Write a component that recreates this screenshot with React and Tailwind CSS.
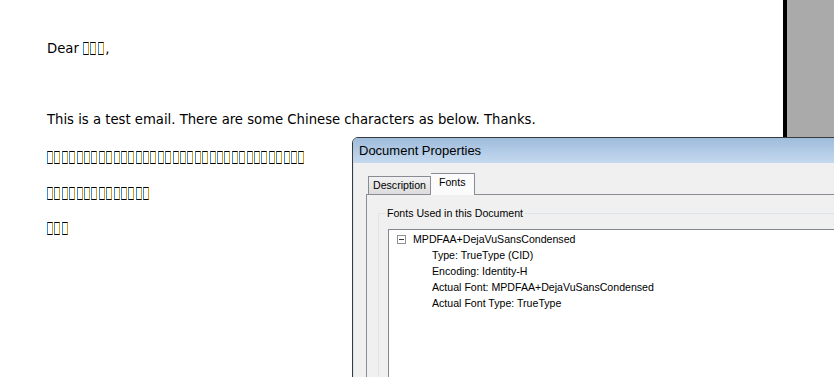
import React from "react";

const Tofu = ({ count }) => (
    <span className="inline-flex items-center align-middle">
        {Array.from({ length: count }).map((_, i) => (
            <span
                key={i}
                className="inline-block w-[6px] h-[13px] mr-[1.4px] border border-black border-l-[#3b8fd6] border-r-[#d99a1e]"
            />
        ))}
    </span>
);

const TreeRow = ({ children, indent }) => (
    <div className={indent ? "pl-[43px]" : "pl-[8px] flex items-center"}>
        {children}
    </div>
);

const App = () => {
    return (
        <div className="relative w-[834px] h-[377px] overflow-hidden bg-white">

            {/* viewer background to the right of the page */}
            <div className="absolute top-0 left-[783px] w-[51px] h-full flex">
                <div className="w-[4px] bg-black"/>
                <div className="flex-1 bg-[#aaaaaa]"/>
            </div>

            {/* email body */}
            <div
                className="pl-[47px] pt-[38px] text-[14.7px] leading-[20px] text-black"
                style={{fontFamily: '"DejaVu Sans Condensed", "DejaVu Sans", sans-serif', fontStretch: "condensed"}}
            >
                <div className="flex items-center">
                    Dear&nbsp;<Tofu count={3}/>,
                </div>

                <div className="mt-[51px]">
                    This is a test email. There are some Chinese characters as below. Thanks.
                </div>

                <div className="mt-[18px] flex items-center h-[20px]">
                    <Tofu count={35}/>
                </div>
                <div className="mt-[16px] flex items-center h-[20px]">
                    <Tofu count={14}/>
                </div>
                <div className="mt-[15px] flex items-center h-[20px]">
                    <Tofu count={3}/>
                </div>
            </div>

            {/* Document Properties window */}
            <div
                className="absolute left-[352px] top-[137px] w-[520px] h-[300px] border border-[#3a3a3a] rounded-tl-[6px] bg-[#f0f0f0] overflow-hidden text-black"
                style={{fontFamily: '"Liberation Sans", Arial, sans-serif'}}
            >
                <div className="h-[25px] bg-gradient-to-b from-[#9fbcdc] to-[#c4d9ef] pl-[6px] flex items-center text-[13px]">
                    Document Properties
                </div>

                <div className="border-l border-[#d9e6f4] h-full pl-[12px] pt-[10px]">

                    {/* tabs */}
                    <div className="flex items-end pl-[2px] text-[10.6px] relative z-10">
                        <div className="h-[18px] px-[4px] flex items-center border border-b-0 border-[#898c95] bg-gradient-to-b from-[#f2f2f2] to-[#dcdcdc]">
                            Description
                        </div>
                        <div className="h-[22px] -mb-px px-[8px] pb-[4px] flex items-center border border-l-0 border-b-0 border-[#898c95] bg-[#fbfbfb]">
                            Fonts
                        </div>
                    </div>

                    {/* tab panel */}
                    <div className="border-l border-t border-[#898c95] pt-[18px] pl-[11px] h-full">

                        {/* group box */}
                        <div className="relative border-l border-t border-[#dde4ea] pt-[15px] pl-[9px] h-full">
                            <span className="absolute -top-[8px] left-[7px] px-[1px] bg-[#f0f0f0] text-[10.6px] leading-[14px]">
                                Fonts Used in this Document
                            </span>

                            <div className="border border-[#828790] bg-white h-[200px] pt-[1px] text-[10.6px] leading-[16px]">
                                <TreeRow>
                                    <span className="w-[9px] h-[9px] border border-[#919191] flex items-center justify-center mr-[7px]">
                                        <span className="w-[5px] h-px bg-[#3a3a3a]"/>
                                    </span>
                                    MPDFAA+DejaVuSansCondensed
                                </TreeRow>
                                <TreeRow indent>Type: TrueType (CID)</TreeRow>
                                <TreeRow indent>Encoding: Identity-H</TreeRow>
                                <TreeRow indent>Actual Font: MPDFAA+DejaVuSansCondensed</TreeRow>
                                <TreeRow indent>Actual Font Type: TrueType</TreeRow>
                            </div>
                        </div>
                    </div>
                </div>
            </div>

        </div>
    );
};

export default App;
